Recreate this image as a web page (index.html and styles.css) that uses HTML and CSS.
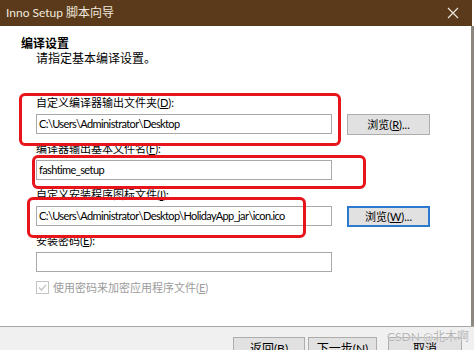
FILE: index.html
```html
<!DOCTYPE html>
<html>
<head>
<meta charset="utf-8">
<link rel="stylesheet" href="styles.css">
</head>
<body>
<div class="window">
  <div class="titlebar">
    <span class="title">Inno Setup 脚本向导</span>
    <svg class="close" width="12" height="12" viewBox="0 0 12 12"><path d="M1 1 L11 11 M11 1 L1 11" stroke="#eee5da" stroke-width="1.2" fill="none"/></svg>
  </div>
  <div class="main">
    <div class="header">
      <div class="h-title">编译设置</div>
      <div class="h-sub">请指定基本编译设置。</div>
    </div>
    <div class="form">
      <div class="group">
        <div class="label">自定义编译器输出文件夹(<u>D</u>):</div>
        <div class="row">
          <div class="input">C:\Users\Administrator\Desktop</div>
          <div class="btn">浏览(<u>R</u>)...</div>
        </div>
      </div>
      <div class="group">
        <div class="label">编译器输出基本文件名(<u>F</u>):</div>
        <div class="row">
          <div class="input">fashtime_setup</div>
        </div>
      </div>
      <div class="group">
        <div class="label">自定义安装程序图标文件(<u>I</u>):</div>
        <div class="row">
          <div class="input">C:\Users\Administrator\Desktop\HolidayApp_jar\icon.ico</div>
          <div class="btn focus">浏览(<u>W</u>)...</div>
        </div>
      </div>
      <div class="group">
        <div class="label">安装密码(<u>E</u>):</div>
        <div class="row">
          <div class="input"></div>
        </div>
      </div>
      <div class="check">
        <svg class="box" width="13" height="13" viewBox="0 0 13 13"><rect x="0.5" y="0.5" width="12" height="12" fill="#fff" stroke="#c4c4c4"/><path d="M3 6.5 L5.5 9 L10 3.8" stroke="#c0c0c0" stroke-width="1.2" fill="none"/></svg>
        <span>使用密码来加密应用程序文件(<u>E</u>)</span>
      </div>
    </div>
  </div>
  <div class="footer">
    <div class="fbtn back">返回(<u>B</u>)</div>
    <div class="fbtn next">下一步(<u>N</u>)</div>
    <div class="fbtn cancel">取消</div>
  </div>
  <div class="mark m1"></div>
  <div class="mark m2"></div>
  <div class="mark m3"></div>
  <div class="watermark">CSDN @北木啊</div>
</div>
</body>
</html>
```
FILE: styles.css
```css
html, body {
  margin: 0;
  padding: 0;
  background: #fff;
}
.window {
  position: relative;
  width: 474px;
  height: 350px;
  overflow: hidden;
  font-family: Lato, "Noto Sans CJK SC", sans-serif;
  font-size: 11px;
  color: #000;
}
.titlebar {
  height: 26px;
  background: #5a3a1a;
  display: flex;
  align-items: center;
  justify-content: space-between;
  padding: 0 13px 0 6px;
  margin-right: 2px;
}
.title {
  color: #f1e9df;
  font-size: 12px;
  line-height: 16px;
}
.close {
  display: block;
}
.main {
  height: 300px;
  background: #fff;
  border-right: 3px solid #8e8780;
  box-sizing: border-box;
}
.header {
  padding: 10px 0 0 21px;
  font-size: 12px;
}
.h-title {
  font-weight: bold;
  line-height: 15px;
}
.h-sub {
  padding-left: 15px;
  line-height: 15px;
}
.form {
  padding: 29px 0 0 36px;
  display: flex;
  flex-direction: column;
}
.group {
  display: flex;
  flex-direction: column;
  gap: 3px;
  margin-bottom: 7px;
  height: 39px;
}
.label {
  line-height: 16px;
  height: 16px;
  white-space: nowrap;
}
.row {
  display: flex;
  align-items: flex-start;
  gap: 15px;
}
.input {
  width: 296px;
  height: 20px;
  box-sizing: border-box;
  border: 1px solid #a9a9a9;
  padding: 0 2px;
  line-height: 18px;
  white-space: nowrap;
  overflow: hidden;
  letter-spacing: -0.6px;
}
.btn {
  width: 83px;
  height: 21px;
  box-sizing: border-box;
  background: #e1e1e1;
  border: 1px solid #adadad;
  text-align: center;
  line-height: 19px;
}
.btn.focus {
  border: 2px solid #2a7ad0;
  line-height: 17px;
}
.check {
  display: flex;
  align-items: center;
  gap: 4px;
  margin-top: 1px;
  color: #9c9c9c;
  line-height: 15px;
}
.box {
  display: block;
}
.footer {
  height: 24px;
  border-top: 1px solid #a8a8a8;
  background: #f0f0f0;
  display: flex;
  padding: 10px 0 0 233px;
  gap: 3px;
  font-size: 12px;
}
.fbtn {
  width: 72px;
  height: 23px;
  box-sizing: border-box;
  background: #e1e1e1;
  border: 1px solid #adadad;
  text-align: center;
  line-height: 21px;
}
.fbtn.next {
  width: 69px;
}
.fbtn.cancel {
  margin-left: 8px;
  width: 74px;
}
.mark {
  position: absolute;
  border: 3px solid #e8141c;
  border-radius: 6px;
  box-sizing: border-box;
}
.m1 { left: 19px; top: 93px; width: 322px; height: 53px; }
.m2 { left: 32px; top: 155px; width: 334px; height: 34px; }
.m3 { left: 27px; top: 197px; width: 279px; height: 41px; }
.watermark {
  position: absolute;
  left: 387px;
  top: 329px;
  color: #b4b4b4;
  font-size: 12px;
  line-height: 16px;
  text-shadow: 0 0 1px #fff;
}
```
